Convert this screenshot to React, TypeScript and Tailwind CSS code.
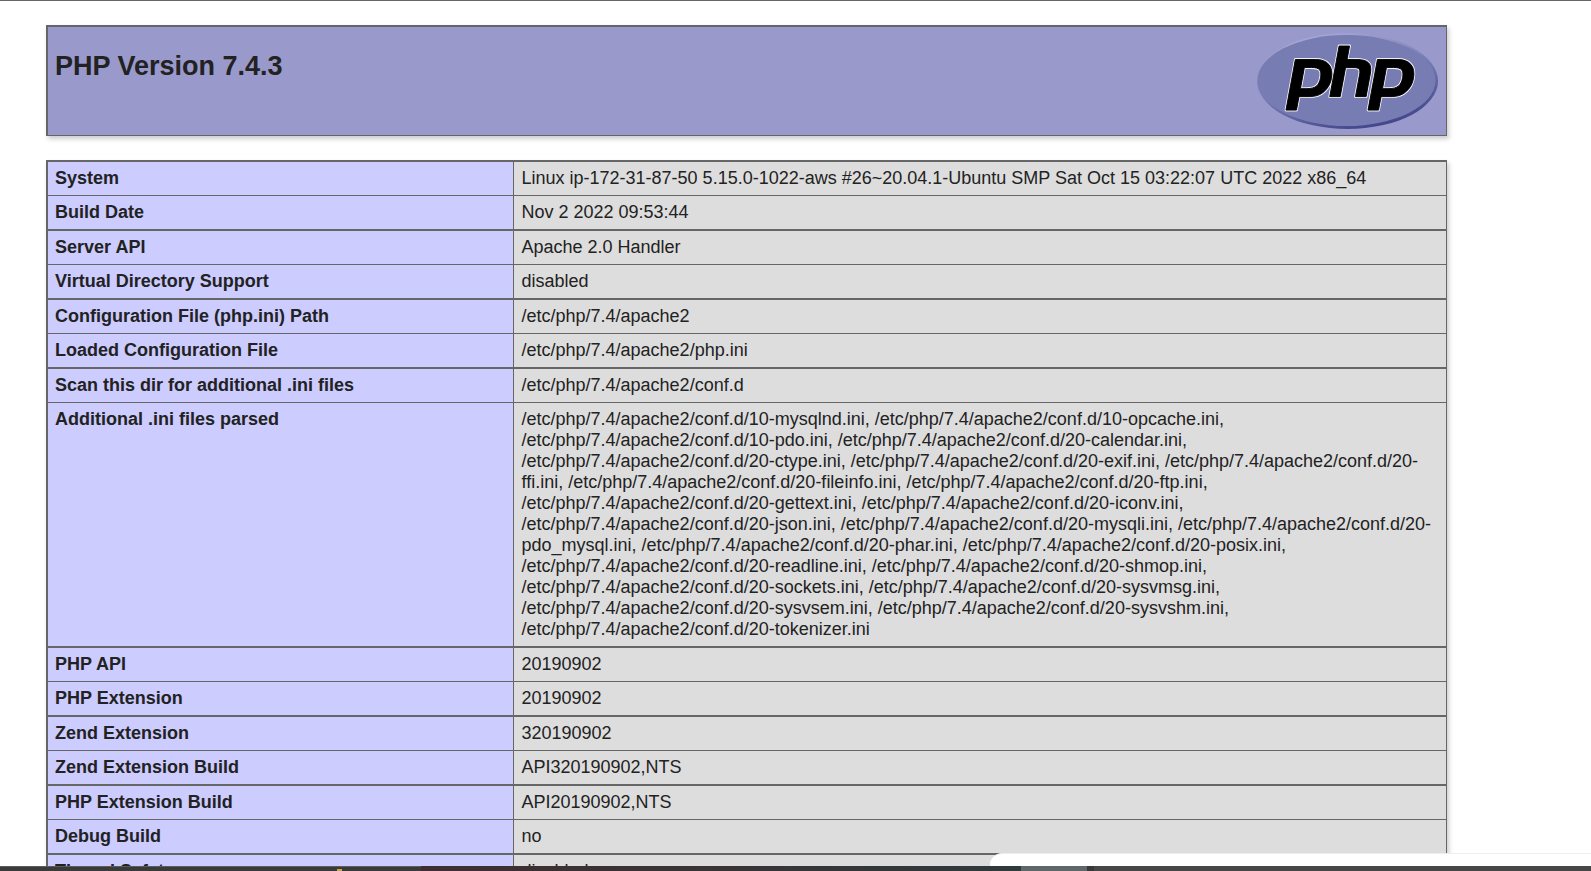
const LETTERS =
  "M7.01 10.207h-.944l-.515 2.648h.838c.556 0 .97-.105 1.242-.314.272-.21.455-.559.55-1.049.092-.47.05-.802-.124-.995-.175-.193-.523-.29-1.047-.29zM8.74 13.139c-.261.25-.575.438-.917.551-.336.108-.765.164-1.285.164H5.357l-.327 1.681H3.652l1.23-6.326h2.65c.797 0 1.378.209 1.744.628.366.418.476 1.002.33 1.752a2.836 2.836 0 0 1-.305.847c-.143.255-.33.49-.561.703zM12.764 13.854l.543-2.799c.063-.318.039-.536-.068-.651-.107-.116-.336-.174-.687-.174H11.46l-.704 3.625H9.388l1.23-6.327h1.367l-.327 1.682h1.218c.767 0 1.295.134 1.586.401s.378.7.263 1.299l-.572 2.944h-1.389zM20.361 11.589a2.782 2.782 0 0 1-.305.847c-.143.255-.33.49-.561.703a2.44 2.44 0 0 1-.917.551c-.336.108-.765.164-1.286.164h-1.18l-.327 1.682h-1.378l1.23-6.326h2.649c.797 0 1.378.209 1.744.628.366.417.477 1.001.331 1.751zM17.766 10.207h-.943l-.516 2.648h.838c.557 0 .971-.105 1.242-.314.272-.21.455-.559.551-1.049.092-.47.049-.802-.125-.995s-.524-.29-1.047-.29z";

function PhpLogo() {
  return (
    <svg width="190" height="104" viewBox="0 0 190 104" className="block shrink-0">
      <defs>
        <linearGradient id="rim" x1="0.25" y1="0" x2="0.7" y2="1">
          <stop offset="0" stopColor="#a9acd6" />
          <stop offset="0.5" stopColor="#777bb3" />
          <stop offset="1" stopColor="#3f4288" />
        </linearGradient>
        <filter id="soft" x="-5%" y="-5%" width="110%" height="110%">
          <feGaussianBlur stdDeviation="0.5" />
        </filter>
      </defs>
      <g filter="url(#soft)">
        <ellipse cx="95.5" cy="52" rx="90.5" ry="48" fill="url(#rim)" />
        <ellipse cx="94.5" cy="51.5" rx="89" ry="45.5" fill="#777bb3" />
        <g transform="translate(6.1 -43.2) scale(7.63 8)">
          <path d={LETTERS} fill="#f4f4fa" fillRule="evenodd" stroke="#f4f4fa" strokeWidth="0.36" strokeLinejoin="round" />
          <path d={LETTERS} fill="#000" fillRule="evenodd" stroke="#000" strokeWidth="0.12" strokeLinejoin="round" />
        </g>
      </g>
    </svg>
  );
}

const ini = [
  "10-mysqlnd", "10-opcache", "10-pdo", "20-calendar", "20-ctype", "20-exif", "20-ffi", "20-fileinfo",
  "20-ftp", "20-gettext", "20-iconv", "20-json", "20-mysqli", "20-pdo_mysql", "20-phar", "20-posix",
  "20-readline", "20-shmop", "20-sockets", "20-sysvmsg", "20-sysvsem", "20-sysvshm", "20-tokenizer",
]
  .map((n) => `/etc/php/7.4/apache2/conf.d/${n}.ini`)
  .join(", ");

type RowData = { k: string; v: string; h: string };

const THICK = "h-[35px] border-t-2 pt-[6px]";
const THIN = "h-[34px] border-t pt-[6px]";

const rows: RowData[] = [
  { k: "System", v: "Linux ip-172-31-87-50 5.15.0-1022-aws #26~20.04.1-Ubuntu SMP Sat Oct 15 03:22:07 UTC 2022 x86_64", h: THICK },
  { k: "Build Date", v: "Nov 2 2022 09:53:44", h: THIN },
  { k: "Server API", v: "Apache 2.0 Handler", h: THICK },
  { k: "Virtual Directory Support", v: "disabled", h: THIN },
  { k: "Configuration File (php.ini) Path", v: "/etc/php/7.4/apache2", h: THICK },
  { k: "Loaded Configuration File", v: "/etc/php/7.4/apache2/php.ini", h: THIN },
  { k: "Scan this dir for additional .ini files", v: "/etc/php/7.4/apache2/conf.d", h: THICK },
  { k: "Additional .ini files parsed", v: ini, h: "h-[244px] border-t pt-[6px]" },
  { k: "PHP API", v: "20190902", h: THICK },
  { k: "PHP Extension", v: "20190902", h: THIN },
  { k: "Zend Extension", v: "320190902", h: THICK },
  { k: "Zend Extension Build", v: "API320190902,NTS", h: THIN },
  { k: "PHP Extension Build", v: "API20190902,NTS", h: THICK },
  { k: "Debug Build", v: "no", h: THIN },
  { k: "Thread Safety", v: "disabled", h: THICK },
];

export default function App() {
  return (
    <div className="relative flex h-[871px] w-[1591px] flex-col overflow-hidden bg-white font-['Liberation_Sans',Arial,sans-serif] text-[18px] leading-[21px] text-[#222]">
      <div className="h-px shrink-0 bg-[#666]" />
      <main className="min-h-0 flex-1 overflow-hidden pl-[46px] pt-[24px]">
        <header className="flex h-[111px] w-[1401px] items-start justify-between border-t-2 border-r border-b border-l-2 border-[#666] bg-[#99c] pl-[7px] pr-[4px] pt-[2px] shadow-[1.5px_3px_4.5px_#ccc]">
          <h1 className="mt-[22px] text-[27px] font-bold leading-[31px]">PHP Version 7.4.3</h1>
          <PhpLogo />
        </header>
        <table className="mt-[24px] w-[1401px] table-fixed border-separate border-spacing-0 shadow-[1.5px_3px_4.5px_#ccc]">
          <colgroup>
            <col className="w-[467px]" />
            <col />
          </colgroup>
          <tbody>
            {rows.map((r) => (
              <tr key={r.k}>
                <td className={`${r.h} border-l-2 border-[#666] bg-[#ccf] px-[7px] align-top font-bold`}>{r.k}</td>
                <td className={`${r.h} border-x border-[#666] bg-[#ddd] pl-[7.5px] pr-[7px] align-top`}>{r.v}</td>
              </tr>
            ))}
          </tbody>
        </table>
      </main>
      <div className="absolute left-[990px] right-0 top-[853px] h-[13px] rounded-tl-[12px] border-t border-[#eee] bg-white" />
      <footer className="relative flex h-[5px] shrink-0">
        <div className="w-[421px] border-t border-[#5c5c5c] bg-[#3a3a3a]" />
        <div className="w-[600px] bg-gradient-to-r from-[#3f2d31] to-[#2f3a3b]" />
        <div className="w-[66px] bg-[#5f6868]" />
        <div className="w-[7px] bg-[#383838]" />
        <div className="flex-1 bg-[#474747]" />
        <div className="absolute left-[337px] top-[3px] h-[2px] w-[5px] bg-[#c8a850]" />
      </footer>
    </div>
  );
}
